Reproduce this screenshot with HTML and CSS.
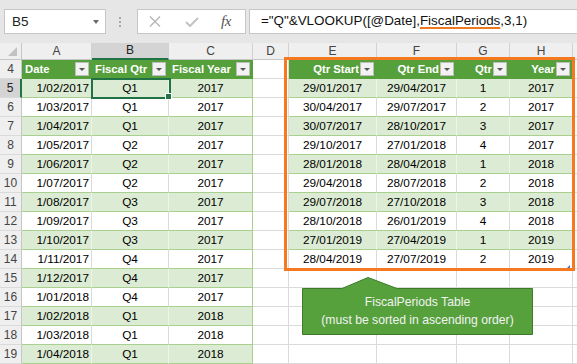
FILE: index.html
```html
<!DOCTYPE html>
<html>
<head>
<meta charset="utf-8">
<link rel="stylesheet" href="styles.css">
</head>
<body>
<div class="fbar">
  <div class="namebox"><span>B5</span><span class="nb-arrow"></span></div>
  <div class="grip"><i></i><i></i><i></i></div>
  <div class="fbtns">
    <svg class="ic-x" width="12" height="11" viewBox="0 0 12 11"><path d="M1 0.5 L11 10.5 M11 0.5 L1 10.5" stroke="#b5b5b5" stroke-width="1.3" fill="none"/></svg>
    <svg class="ic-ok" width="14" height="10" viewBox="0 0 14 10"><path d="M1 5 L5 9 L13 1" stroke="#c3c3c3" stroke-width="2" fill="none"/></svg>
    <span class="fx">fx</span>
  </div>
  <div class="finput">="Q"&amp;VLOOKUP([@Date],<span class="ul">FiscalPeriods</span>,3,1)</div>
</div>

<div class="sheet">
  <div class="row">
    <div class="ch corner"></div><div class="ch">A</div><div class="ch sel">B</div><div class="ch">C</div><div class="ch">D</div><div class="ch">E</div><div class="ch">F</div><div class="ch">G</div><div class="ch">H</div><div class="ch last"></div>
  </div>
  <div class="row">
    <div class="rh">4</div>
    <div class="c th"><span>Date</span><b class="dd"></b></div>
    <div class="c th"><span>Fiscal Qtr</span><b class="dd"></b></div>
    <div class="c th"><span>Fiscal Year</span><b class="dd"></b></div>
    <div class="c"></div>
    <div class="c th rt"><span>Qtr Start</span><b class="dd"></b></div>
    <div class="c th rt"><span>Qtr End</span><b class="dd"></b></div>
    <div class="c th rt"><span>Qtr</span><b class="dd"></b></div>
    <div class="c th rt"><span>Year</span><b class="dd"></b></div>
    <div class="c i"></div>
  </div>
  <div class="row g"><div class="rh sel">5</div><div class="c t r">1/02/2017</div><div class="c t m">Q1</div><div class="c t m te">2017</div><div class="c"></div><div class="c t m">29/01/2017</div><div class="c t m">29/04/2017</div><div class="c t m">1</div><div class="c t m">2017</div><div class="c i"></div></div>
  <div class="row w"><div class="rh">6</div><div class="c t r">1/03/2017</div><div class="c t m">Q1</div><div class="c t m te">2017</div><div class="c"></div><div class="c t m">30/04/2017</div><div class="c t m">29/07/2017</div><div class="c t m">2</div><div class="c t m">2017</div><div class="c i"></div></div>
  <div class="row g"><div class="rh">7</div><div class="c t r">1/04/2017</div><div class="c t m">Q1</div><div class="c t m te">2017</div><div class="c"></div><div class="c t m">30/07/2017</div><div class="c t m">28/10/2017</div><div class="c t m">3</div><div class="c t m">2017</div><div class="c i"></div></div>
  <div class="row w"><div class="rh">8</div><div class="c t r">1/05/2017</div><div class="c t m">Q2</div><div class="c t m te">2017</div><div class="c"></div><div class="c t m">29/10/2017</div><div class="c t m">27/01/2018</div><div class="c t m">4</div><div class="c t m">2017</div><div class="c i"></div></div>
  <div class="row g"><div class="rh">9</div><div class="c t r">1/06/2017</div><div class="c t m">Q2</div><div class="c t m te">2017</div><div class="c"></div><div class="c t m">28/01/2018</div><div class="c t m">28/04/2018</div><div class="c t m">1</div><div class="c t m">2018</div><div class="c i"></div></div>
  <div class="row w"><div class="rh">10</div><div class="c t r">1/07/2017</div><div class="c t m">Q2</div><div class="c t m te">2017</div><div class="c"></div><div class="c t m">29/04/2018</div><div class="c t m">28/07/2018</div><div class="c t m">2</div><div class="c t m">2018</div><div class="c i"></div></div>
  <div class="row g"><div class="rh">11</div><div class="c t r">1/08/2017</div><div class="c t m">Q3</div><div class="c t m te">2017</div><div class="c"></div><div class="c t m">29/07/2018</div><div class="c t m">27/10/2018</div><div class="c t m">3</div><div class="c t m">2018</div><div class="c i"></div></div>
  <div class="row w"><div class="rh">12</div><div class="c t r">1/09/2017</div><div class="c t m">Q3</div><div class="c t m te">2017</div><div class="c"></div><div class="c t m">28/10/2018</div><div class="c t m">26/01/2019</div><div class="c t m">4</div><div class="c t m">2018</div><div class="c i"></div></div>
  <div class="row g"><div class="rh">13</div><div class="c t r">1/10/2017</div><div class="c t m">Q3</div><div class="c t m te">2017</div><div class="c"></div><div class="c t m">27/01/2019</div><div class="c t m">27/04/2019</div><div class="c t m">1</div><div class="c t m">2019</div><div class="c i"></div></div>
  <div class="row w"><div class="rh">14</div><div class="c t r">1/11/2017</div><div class="c t m">Q4</div><div class="c t m te">2017</div><div class="c"></div><div class="c t m">28/04/2019</div><div class="c t m">27/07/2019</div><div class="c t m">2</div><div class="c t m">2019</div><div class="c i"></div></div>
  <div class="row g"><div class="rh">15</div><div class="c t r">1/12/2017</div><div class="c t m">Q4</div><div class="c t m te">2017</div><div class="c"></div><div class="c"></div><div class="c"></div><div class="c"></div><div class="c"></div><div class="c i"></div></div>
  <div class="row w"><div class="rh">16</div><div class="c t r">1/01/2018</div><div class="c t m">Q4</div><div class="c t m te">2017</div><div class="c"></div><div class="c"></div><div class="c"></div><div class="c"></div><div class="c"></div><div class="c i"></div></div>
  <div class="row g"><div class="rh">17</div><div class="c t r">1/02/2018</div><div class="c t m">Q1</div><div class="c t m te">2018</div><div class="c"></div><div class="c"></div><div class="c"></div><div class="c"></div><div class="c"></div><div class="c i"></div></div>
  <div class="row w"><div class="rh">18</div><div class="c t r">1/03/2018</div><div class="c t m">Q1</div><div class="c t m te">2018</div><div class="c"></div><div class="c"></div><div class="c"></div><div class="c"></div><div class="c"></div><div class="c i"></div></div>
  <div class="row g"><div class="rh">19</div><div class="c t r">1/04/2018</div><div class="c t m">Q1</div><div class="c t m te">2018</div><div class="c"></div><div class="c"></div><div class="c"></div><div class="c"></div><div class="c"></div><div class="c i"></div></div>

  <div class="selbox"><span class="handle"></span></div>
  <div class="hilite"></div>
  <span class="resize"></span>
  <div class="callout">
    <svg class="callout-bg" width="235" height="62" viewBox="0 0 235 62"><path d="M2.5 13.5 H42 L68 2.5 L97 13.5 H232.5 V59.5 H2.5 Z" fill="#56a13c" stroke="#3d7b2a" stroke-width="1"/></svg>
    <div class="callout-text">FiscalPeriods Table<br>(must be sorted in ascending order)</div>
  </div>
</div>
</body>
</html>
```

FILE: styles.css
```css
html, body {
  margin: 0;
  padding: 0;
  background: #fff;
}
body {
  width: 577px;
  height: 364px;
  overflow: hidden;
  font-family: "Liberation Sans", Arial, sans-serif;
  color: #000;
}

/* ---------- formula bar ---------- */
.fbar {
  height: 43px;
  box-sizing: border-box;
  background: #e6e6e6;
  display: flex;
  align-items: flex-start;
  padding: 9px 0 0 4px;
}
.namebox {
  width: 102px;
  height: 25px;
  box-sizing: border-box;
  background: #fff;
  border: 1px solid #c6c6c6;
  display: flex;
  align-items: center;
  justify-content: space-between;
  padding: 0 6px 0 7px;
  font-size: 13.5px;
  color: #222;
}
.nb-arrow {
  width: 0;
  height: 0;
  border-left: 3.5px solid transparent;
  border-right: 3.5px solid transparent;
  border-top: 4px solid #6a6a6a;
}
.grip {
  margin-left: 13px;
  width: 3px;
  padding-top: 8px;
  display: flex;
  flex-direction: column;
  gap: 2px;
}
.grip i {
  display: block;
  width: 2px;
  height: 2px;
  background: #a8a8a8;
}
.fbtns {
  margin-left: 15px;
  width: 109px;
  height: 25px;
  box-sizing: border-box;
  background: #fff;
  border: 1px solid #c6c6c6;
  display: flex;
  align-items: center;
  padding-left: 11px;
}
.ic-ok {
  margin-left: 24px;
}
.fx {
  margin-left: 22px;
  font-family: "Liberation Serif", "Times New Roman", serif;
  font-style: italic;
  font-size: 15px;
  color: #555;
  letter-spacing: -0.5px;
  line-height: 1;
}
.finput {
  margin-left: 3px;
  flex: 1;
  height: 25px;
  box-sizing: border-box;
  background: #fff;
  border: 1px solid #c6c6c6;
  border-right: none;
  padding-left: 11px;
  font-size: 13.4px;
  line-height: 22px;
  color: #111;
  white-space: nowrap;
}
.ul {
  text-decoration: underline;
  text-decoration-color: #f0781e;
  text-decoration-thickness: 2px;
  text-underline-offset: 2px;
}

/* ---------- sheet grid ---------- */
.sheet {
  position: relative;
  display: grid;
  grid-template-columns: 22px 70px 77px 84px 36px 88px 80px 53px 63px 4px;
  grid-template-rows: 17px;
  grid-auto-rows: 19px;
}
.row {
  display: contents;
}
.ch {
  box-sizing: border-box;
  background: #efefef;
  border-right: 1px solid #d2d2d2;
  border-bottom: 1px solid #c6c6c6;
  text-align: center;
  font-size: 12px;
  line-height: 16px;
  color: #444;
}
.ch.sel {
  background: #d4d4d4;
  border-bottom: 2px solid #217346;
  line-height: 15px;
  color: #222;
}
.ch.last {
  border-right: none;
}
.ch.corner {
  position: relative;
  border-right-color: #c6c6c6;
}
.ch.corner::after {
  content: "";
  position: absolute;
  right: 4px;
  bottom: 3px;
  width: 0;
  height: 0;
  border-left: 9px solid transparent;
  border-bottom: 9px solid #c2c2c2;
}
.rh {
  box-sizing: border-box;
  background: #efefef;
  border-right: 1px solid #c6c6c6;
  border-bottom: 1px solid #dadada;
  text-align: center;
  font-size: 12px;
  line-height: 18px;
  color: #444;
}
.rh.sel {
  background: #d4d4d4;
  border-right: 2px solid #217346;
  color: #222;
}
.c {
  box-sizing: border-box;
  border-right: 1px solid #dadada;
  border-bottom: 1px solid #dadada;
  font-size: 11.8px;
  line-height: 18px;
  white-space: nowrap;
  overflow: hidden;
  padding: 0 2px;
}
.c.i {
  border-right: none;
}
.r {
  text-align: right;
}
.m {
  text-align: center;
}

/* table styling */
.th {
  display: flex;
  align-items: center;
  background: #55a03b;
  border-right-color: #55a03b;
  border-bottom-color: #55a03b;
  color: #fff;
  font-weight: bold;
  font-size: 11.3px;
  padding: 0 2px 0 3px;
}
.th span {
  flex: 1;
  overflow: hidden;
}
.th.rt span {
  text-align: right;
  margin-right: 1px;
}
.dd {
  flex: none;
  width: 14px;
  height: 14px;
  box-sizing: border-box;
  background: #f2f2f2;
  border: 1px solid #bdbdbd;
  display: flex;
  align-items: center;
  justify-content: center;
}
.dd::after {
  content: "";
  width: 0;
  height: 0;
  border-left: 3px solid transparent;
  border-right: 3px solid transparent;
  border-top: 3px solid #555;
}
.row.g .t {
  background: #dcecd4;
  border-bottom-color: #a9d08e;
  border-right-color: #edf5e8;
}
.row.w .t {
  border-bottom-color: #a9d08e;
}
.row .t.te {
  border-right-color: #a9d08e;
}

/* ---------- overlays ---------- */
.selbox {
  position: absolute;
  left: 91px;
  top: 35px;
  width: 80px;
  height: 21px;
  box-sizing: border-box;
  border: 2px solid #217346;
}
.handle {
  position: absolute;
  right: -3px;
  bottom: -3px;
  width: 5px;
  height: 5px;
  background: #217346;
  border: 1px solid #fff;
}
.hilite {
  position: absolute;
  left: 284px;
  top: 14px;
  width: 291px;
  height: 214px;
  box-sizing: border-box;
  border: 3px solid #f47920;
}
.resize {
  position: absolute;
  left: 567px;
  top: 222px;
  width: 0;
  height: 0;
  border-left: 3px solid transparent;
  border-bottom: 3px solid #4a6fb5;
}
.callout {
  position: absolute;
  left: 300px;
  top: 232px;
  width: 235px;
  height: 62px;
}
.callout-bg {
  position: absolute;
  left: 0;
  top: 0;
}
.callout-text {
  position: absolute;
  left: 2px;
  right: 2px;
  top: 13px;
  height: 47px;
  display: flex;
  align-items: center;
  justify-content: center;
  text-align: center;
  color: #f2f2f2;
  font-size: 12.2px;
  line-height: 17.5px;
}
```
